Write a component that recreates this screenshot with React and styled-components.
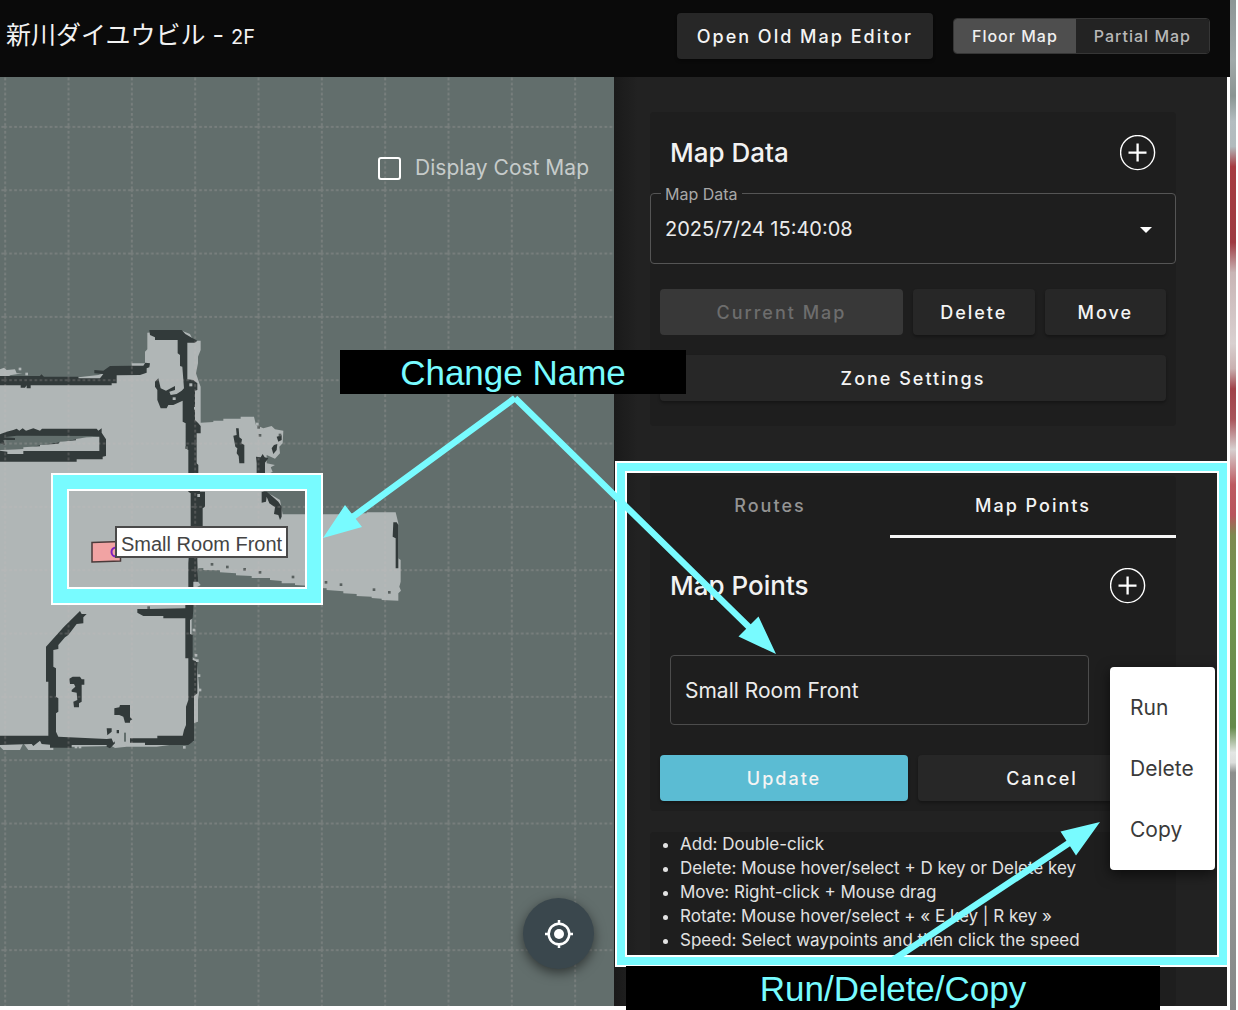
import React, { useState } from "react";
import styled, { createGlobalStyle } from "styled-components";

const CYAN = "#78fbff";
const WALL = "#323a3a";
const FLOOR = "#b0b6b6";
const GROUND = "#626e6c";

const GlobalStyle = createGlobalStyle`
  *, *::before, *::after { box-sizing: border-box; }
  body {
    margin: 0;
    background: #fff;
    color: #f2f2f2;
    font-family: Inter, "Noto Sans CJK JP", sans-serif;
  }
  button, input, select { font-family: inherit; }
`;

const Page = styled.div`
  position: relative;
  display: flex;
  min-height: 100vh;
  overflow: hidden;
`;

const Editor = styled.div`
  flex: 1;
  min-width: 0;
  display: flex;
  flex-direction: column;
  padding-bottom: 4px;
`;

const Backdrop = styled.div`
  width: 8px;
  border-right: 2px solid #fff;
  background: linear-gradient(
    #8d9696 0%, #a0a9a9 6%, #8a9592 9.5%, #b4bdc0 12%, #b2bbbd 14.5%,
    #a63a40 16.5%, #9e3a42 24%, #c9b5b5 27%, #d9d0d0 34%, #c9b0b0 36.5%,
    #a04249 38.5%, #a8545a 41.5%, #d8d0d0 44.5%, #bd5a60 48%, #b8545c 51%,
    #7d8a50 53%, #71944f 60%, #658a4b 72%, #e4e6e4 74.5%, #dcdedc 75.5%,
    #8c8f8d 76.5%, #949695 86%, #858887 100%
  );
`;

const Header = styled.header`
  display: flex;
  align-items: center;
  gap: 20px;
  height: 77px;
  padding: 0 20px 5px 6px;
  background: #0a0a0a;
`;

const Title = styled.h1`
  flex: 1;
  margin: 0;
  font-size: 25px;
  line-height: 36px;
  font-weight: 400;
  white-space: nowrap;
`;

const Level = styled.span`
  font-size: 20px;
`;

const Button = styled.button`
  height: 46px;
  padding: 0 ${(p) => p.$pad || 0}px;
  border: 0;
  border-radius: 4px;
  background: ${(p) => (p.$primary ? "#5bbcd3" : "#272727")};
  color: #f4f4f4;
  font-size: 18px;
  font-weight: 500;
  letter-spacing: 2px;
  white-space: nowrap;
  box-shadow: 0 2px 3px rgba(0, 0, 0, 0.3);
  &:disabled {
    background: #383838;
    color: #6d6d6d;
    box-shadow: none;
  }
`;

const Toggle = styled.div`
  display: flex;
  height: 36px;
  border: 1px solid #363636;
  border-radius: 4px;
  overflow: hidden;
`;

const ToggleButton = styled.button`
  padding: 0 18px;
  border: 0;
  background: ${(p) => (p.$on ? "#4e4e4e" : "#232323")};
  color: ${(p) => (p.$on ? "#f0f0f0" : "#b8b8b8")};
  font-size: 16px;
  font-weight: 500;
  letter-spacing: 1px;
`;

const Body = styled.main`
  flex: 1;
  display: flex;
  padding-right: 3px;
`;

const MapArea = styled.section`
  position: relative;
  flex: 1;
  min-width: 0;
  overflow: hidden;
  background: ${GROUND};
`;

const MapDrawing = styled.svg`
  position: absolute;
  inset: 0;
  width: 100%;
  height: 100%;
`;

const CostToggle = styled.label`
  position: absolute;
  top: 77px;
  right: 25px;
  display: flex;
  align-items: center;
  gap: 14px;
  color: #c6cbca;
  font-size: 21px;
  line-height: 28px;
`;

const CheckBox = styled.input`
  appearance: none;
  width: 23px;
  height: 23px;
  margin: 0;
  border: 2px solid #fff;
  border-radius: 3px;
  &:checked { background: #5bbcd3; }
`;

const PointLabel = styled.div`
  position: absolute;
  left: 115px;
  top: 449px;
  height: 32px;
  padding: 2px 4px 0;
  border: 2px solid #4a4a4a;
  background: #fff;
  color: #444;
  font: 20px/28px "Liberation Sans", sans-serif;
  white-space: nowrap;
`;

const LocateButton = styled.button`
  position: absolute;
  right: 20px;
  bottom: 37px;
  display: grid;
  place-items: center;
  width: 71px;
  height: 71px;
  padding: 0;
  border: 0;
  border-radius: 50%;
  background: #3a474d;
  box-shadow: 0 4px 12px rgba(0, 0, 0, 0.5);
`;

const Panel = styled.aside`
  position: relative;
  display: flex;
  flex-direction: column;
  width: 613px;
  padding: 35px 51px 0 36px;
  background: linear-gradient(90deg, #1a1a1a, #222 24px);
`;

const Card = styled.section`
  display: flex;
  flex-direction: column;
  margin-bottom: ${(p) => p.$gap}px;
  padding-bottom: ${(p) => p.$bottom}px;
  border-radius: 4px;
  background: #1e1e1e;
`;

const CardHead = styled.div`
  display: flex;
  align-items: center;
  justify-content: space-between;
  padding: ${(p) => p.$top}px ${(p) => p.$right}px 0 20px;
`;

const CardTitle = styled.h2`
  margin: 0;
  font-size: 26px;
  line-height: 36px;
  font-weight: 500;
`;

const AddButton = styled.button`
  width: 36px;
  height: 36px;
  padding: 0;
  border: 0;
  background: none;
  svg { display: block; }
`;

const SelectField = styled.div`
  position: relative;
  margin-top: 22px;
`;

const FloatLabel = styled.label`
  position: absolute;
  left: 11px;
  top: -9px;
  padding: 0 4px;
  background: #1e1e1e;
  color: #a8a8a8;
  font-size: 16px;
  line-height: 20px;
`;

const Select = styled.select`
  appearance: none;
  display: block;
  width: 100%;
  height: 71px;
  padding: 0 14px;
  border: 1px solid #555;
  border-radius: 4px;
  background: transparent;
  color: #ececec;
  font-size: 20px;
`;

const Caret = styled.span`
  position: absolute;
  right: 24px;
  top: 34px;
  border: 6px solid transparent;
  border-top-color: #fff;
  border-bottom: 0;
  pointer-events: none;
`;

const ButtonGrid = styled.div`
  display: grid;
  grid-template-columns: ${(p) => p.$cols};
  gap: 10px;
  margin-top: ${(p) => p.$top}px;
  padding: 0 10px;
`;

const Tabs = styled.div`
  display: grid;
  grid-template-columns: 240fr 286fr;
`;

const Tab = styled.button`
  height: 62px;
  padding: 0;
  border: 0;
  border-bottom: 3px solid ${(p) => (p.$on ? "#f6f6f6" : "transparent")};
  background: none;
  color: ${(p) => (p.$on ? "#f4f4f4" : "#949494")};
  font-size: 18px;
  font-weight: 500;
  letter-spacing: 2px;
`;

const NameRow = styled.div`
  display: flex;
  padding: 51px 87px 0 20px;
`;

const NameInput = styled.input`
  flex: 1;
  min-width: 0;
  height: 70px;
  padding: 0 14px;
  border: 1px solid #4c4c4c;
  border-radius: 4px;
  background: transparent;
  color: #ececec;
  font-size: 21px;
`;

const Help = styled.ul`
  flex: 1;
  margin: 0;
  padding: 0 0 0 30px;
  border-radius: 4px;
  background: #1e1e1e;
  color: #e2e2e2;
  font-size: 17px;
  line-height: 24px;
  white-space: nowrap;
`;

const Menu = styled.div`
  position: absolute;
  right: 12px;
  top: 590px;
  display: flex;
  flex-direction: column;
  width: 105px;
  padding: 10px 0;
  border-radius: 4px;
  background: #fff;
  box-shadow: 0 4px 14px rgba(0, 0, 0, 0.6);
`;

const MenuItem = styled.button`
  height: 61px;
  padding: 0 20px;
  border: 0;
  background: none;
  color: #3a3a3a;
  font-size: 21px;
  text-align: left;
`;

const Highlight = styled.div`
  position: absolute;
  left: ${(p) => p.$x}px;
  top: ${(p) => p.$y}px;
  width: ${(p) => p.$w}px;
  height: ${(p) => p.$h}px;
  border: ${(p) => p.$line}px solid ${CYAN};
  box-shadow: 0 0 0 2px #fff, inset 0 0 0 2px #fff;
  pointer-events: none;
`;

const Arrows = styled.svg`
  position: absolute;
  left: 0;
  top: 0;
  pointer-events: none;
`;

const Callout = styled.div`
  position: absolute;
  left: ${(p) => p.$x}px;
  top: ${(p) => p.$y}px;
  width: ${(p) => p.$w}px;
  height: 44px;
  padding-top: 1px;
  background: #000;
  color: ${CYAN};
  font: 35px/44px "Liberation Sans", sans-serif;
  text-align: center;
`;

function PlusIcon() {
  return (
    <svg width="36" height="36" viewBox="0 0 36 36" fill="none" stroke="#fff">
      <circle cx="17.6" cy="17.6" r="17" strokeWidth="1.4" />
      <path d="M17.600 8.500v18M8.500 17.600h18" strokeWidth="2.300" />
    </svg>
  );
}

function TargetIcon() {
  return (
    <svg width="30" height="30" viewBox="0 0 30 30" fill="none" stroke="#fff" strokeWidth="2.5">
      <circle cx="15" cy="15" r="10.3" />
      <circle cx="15" cy="15" r="5" fill="#fff" stroke="none" />
      <path d="M15 1v4M15 25v4M1 15h4M25 15h4" />
    </svg>
  );
}

const specks = [
  [636, 733], [682, 741], [734, 748], [780, 757], [879, 771], [978, 787], [1023, 794],
  [1122, 809], [1168, 817], [776, 322], [780, 346], [840, 345], [446, 863], [560, 383],
];

const paleSpecks = [
  [588, 1006], [597, 1067], [553, 1282], [228, 1281], [240, 1281], [413, 1273], [430, 1273],
  [60, 147], [80, 162], [592, 1022], [600, 1110], [582, 930], [772, 312], [808, 440], [586, 265],
];

/* Scanned floor plan: drawn at three units per pixel, origin at the plan's top-left corner. */
function FloorPlan() {
  return (
    <MapDrawing aria-label="Floor plan">
      <defs>
        <pattern id="grid" x="4.2" y="48.9" width="63.33" height="63.33" patternUnits="userSpaceOnUse">
          <path
            d="M0 1H63.33M1 0V63.33"
            stroke="#c9b9b9"
            strokeOpacity="0.22"
            strokeWidth="2"
            strokeDasharray="2.6 2.45"
          />
        </pattern>
      </defs>
      <g transform="translate(0 243) scale(0.33333)">
        <path
          fill={FLOOR}
          d="M0 148L12 143L20 150L45 148L50 160L68 160L30 166L20 178L0 178V195L235 190V172L295 165L340 150L395 140V130H435V95L442 88V38L540 30L570 42L580 62H602V90L594 110V130L588 160L598 190L602 200V308L640 306V302L670 302V296L722 296V290H762L768 315L790 325L815 318L825 328L850 332L848 370L838 380L840 400L825 416L800 405V430L825 435L812 442L818 455L790 470V515L815 525L840 540L848 583L1040 583V580L1100 580V577H1187L1195 610V715L1202 720V785L1198 800L1203 812L1195 820V842L1145 840V836L1115 834V830L1070 828V822L1030 820V814L980 810V805L925 803V797L885 795V790L845 790V783L810 780V774L755 774V768L708 766V760L660 757V751L610 750V744L595 745L590 780L602 795L590 802L575 810V1010L590 1020L598 1110L594 1140V1205L580 1210V1265L470 1280H380L345 1284L335 1278L160 1282V1290H85L70 1270L60 1290H10L0 1280Z"
        />
        <path
          fill={WALL}
          d="M0 168H120L124 163L132 170H235V175H300L310 162L283 160V150L310 152L330 138L395 137H430L436 128L450 130L448 142L440 145V158L420 165L350 166V190L335 190V196L92 196V205H80V196L75 203H62V196H0Z
             M448 30H545L556 42L578 55L592 62L585 68L562 68V178L580 180L592 190V210L585 212V300L595 310L602 318V340L590 340V430L595 435V460L600 515H615V560L608 565V620L592 700V720L594 785H580V865L578 895L570 900V942L578 945V1020L592 1025V1120L582 1128V1262L565 1275H435V1268H390V1255H472V1247H548L552 1230L558 1215V1160L565 1140V1015H556V895L490 895V888L430 888L412 878V867H445L556 865V855H565V730L572 620V520L565 515V390L557 385V310L548 305V242L520 255H505L500 265H482L472 240V210L465 200V185L475 175L482 205L498 212L512 205L525 198V210L508 215L512 225L530 222L545 212L552 205L547 140L540 138L540 105L533 100V60H465V52L450 45Z
             M0 343L20 335L40 330L50 326L58 332L68 325L78 332L100 325L120 332L126 326H290L295 332L305 325V338L318 358V408L308 410V418H230V425H0Z
             M240 873L245 882L260 882L250 892V910L230 912L205 945L195 952L175 975V987L160 990V1040L168 1045V1130L175 1135V1175L168 1180V1235L175 1250L320 1257L340 1255L345 1270L330 1285L320 1280V1275H215V1283H150V1274L125 1272L120 1262L100 1278L95 1272L0 1275V1247H145V1085H138V980L192 920Z
             M208 1076L218 1070H240L245 1078H253V1094H245V1145L237 1150V1162H222L220 1145L232 1140L230 1118L215 1115V1110L226 1100L222 1092H210Z
             M343 1165L358 1162L360 1155H390V1192L397 1198L390 1202V1208H375L370 1190L358 1185H343Z
             M320 1225H335V1235L322 1246Z M350 1230H357V1240H350Z
             M700 347L710 345L708 325H716L718 352L726 358L724 370L733 375V430H718L716 408L710 400L712 385L706 380Z
             M768 410L782 412L788 402L794 412L805 415L795 428V460H770V430Z
             M785 515H800L812 525L835 545L845 560V590L840 600L835 585L822 582L825 562L808 550L800 530L798 545L785 548Z
             M1180 607H1190L1195 615V745H1187V655L1178 650Z
             M830 350L845 346V360L835 365ZM815 385L822 375L832 372L830 390L820 402Z"
        />
        <path fill={GROUND} d="M10 352L50 347L298 348L230 358L170 368L120 376L70 388L0 390V370L15 375L10 360H45V354Z" />
        <path fill={FLOOR} d="M298 350V393H70V402H22V395L0 392V390L70 387V382L120 379V375L175 371L180 365L228 361V357L260 352Z" />
        <path fill={FLOOR} d="M330 1243L345 1235L350 1250L370 1230V1245L382 1240V1265L375 1280L360 1275L350 1257L340 1268Z" />
        <path fill={GROUND} d="M372 1238H378V1265H372Z" />
        <g fill={FLOOR}>
          <rect x="568" y="190" width="9" height="9" />
          <rect x="518" y="232" width="9" height="8" />
          <rect x="592" y="522" width="8" height="9" />
          {paleSpecks.map(([x, y]) => (
            <rect key={`${x}-${y}`} x={x - 4} y={y - 4} width="8" height="8" />
          ))}
        </g>
        <g fill="#59605f">
          {specks.map(([x, y]) => (
            <rect key={`${x}-${y}`} x={x - 4} y={y - 4} width="8" height="8" />
          ))}
        </g>
      </g>
      <rect width="100%" height="100%" fill="url(#grid)" />
      <path d="M92 465.500L120.500 464.500V484L92 485Z" fill="#f1a3a3" stroke="#4a3a3a" strokeWidth="1.500" />
      <circle cx="116" cy="475" r="4.500" fill="none" stroke="#7d1fc0" strokeWidth="2" />
    </MapDrawing>
  );
}

export default function App() {
  const [view, setView] = useState("floor");
  const [tab, setTab] = useState("points");
  const [name, setName] = useState("Small Room Front");

  return (
    <Page>
      <GlobalStyle />
      <Editor>
        <Header>
          <Title>
            新川ダイユウビル - <Level>2F</Level>
          </Title>
          <Button $pad={20}>Open Old Map Editor</Button>
          <Toggle>
            <ToggleButton $on={view === "floor"} onClick={() => setView("floor")}>Floor Map</ToggleButton>
            <ToggleButton $on={view === "partial"} onClick={() => setView("partial")}>Partial Map</ToggleButton>
          </Toggle>
        </Header>
        <Body>
          <MapArea>
            <FloorPlan />
            <CostToggle>
              <CheckBox type="checkbox" />
              Display Cost Map
            </CostToggle>
            <PointLabel>Small Room Front</PointLabel>
            <LocateButton aria-label="Locate"><TargetIcon /></LocateButton>
          </MapArea>
          <Panel>
            <Card $gap={50} $bottom={25}>
              <CardHead $top={23} $right={20}>
                <CardTitle>Map Data</CardTitle>
                <AddButton aria-label="Add map data"><PlusIcon /></AddButton>
              </CardHead>
              <SelectField>
                <Select id="map-data">
                  <option>2025/7/24 15:40:08</option>
                </Select>
                <FloatLabel htmlFor="map-data">Map Data</FloatLabel>
                <Caret />
              </SelectField>
              <ButtonGrid $cols="2fr 1fr 1fr" $top={25}>
                <Button disabled>Current Map</Button>
                <Button>Delete</Button>
                <Button>Move</Button>
              </ButtonGrid>
              <ButtonGrid $cols="1fr" $top={20}>
                <Button>Zone Settings</Button>
              </ButtonGrid>
            </Card>
            <Card $gap={21} $bottom={10}>
              <Tabs role="tablist">
                <Tab role="tab" $on={tab === "routes"} onClick={() => setTab("routes")}>Routes</Tab>
                <Tab role="tab" $on={tab === "points"} onClick={() => setTab("points")}>Map Points</Tab>
              </Tabs>
              <CardHead $top={30} $right={30}>
                <CardTitle>Map Points</CardTitle>
                <AddButton aria-label="Add map point"><PlusIcon /></AddButton>
              </CardHead>
              <NameRow>
                <NameInput aria-label="Point name" value={name} onChange={(e) => setName(e.target.value)} />
              </NameRow>
              <ButtonGrid $cols="1fr 1fr" $top={30}>
                <Button $primary>Update</Button>
                <Button>Cancel</Button>
              </ButtonGrid>
            </Card>
            <Help>
              <li>Add: Double-click</li>
              <li>Delete: Mouse hover/select + D key or Delete key</li>
              <li>Move: Right-click + Mouse drag</li>
              <li>Rotate: Mouse hover/select + « E key | R key »</li>
              <li>Speed: Select waypoints and then click the speed</li>
            </Help>
            <Menu>
              <MenuItem>Run</MenuItem>
              <MenuItem>Delete</MenuItem>
              <MenuItem>Copy</MenuItem>
            </Menu>
          </Panel>
        </Body>
      </Editor>
      <Backdrop />
      <Highlight $x={53} $y={475} $w={268} $h={128} $line={14} />
      <Highlight $x={617} $y={463} $w={610} $h={502} $line={8} />
      <Arrows width="1238" height="1010" stroke={CYAN} strokeWidth="6.500" fill={CYAN}>
        <path d="M515 398L350 519M515 398L752 630M893 960L1072 841" />
        <path stroke="none" d="M323 538L345 505L362 527ZM776 654L758.500 616.500L738.500 636.500ZM1100 822L1060.500 831.500L1076 855.500Z" />
      </Arrows>
      <Callout $x={340} $y={350} $w={346}>Change Name</Callout>
      <Callout $x={626} $y={966} $w={534}>Run/Delete/Copy</Callout>
    </Page>
  );
}
